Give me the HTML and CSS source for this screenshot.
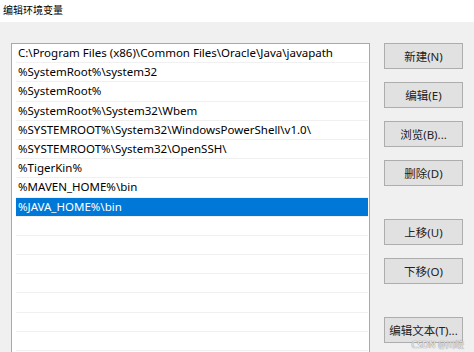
FILE: index.html
```html
<!DOCTYPE html>
<html lang="zh-CN">
<head>
    <meta charset="UTF-8">
    <meta name="viewport" content="width=device-width, initial-scale=1.0">
    <title>编辑环境变量</title>
    <link rel="stylesheet" href="styles.css">
</head>
<body>
    <div class="title-bar">编辑环境变量</div>
    <div class="dialog">
        <div class="path-list">
            <div class="row">C:\Program Files (x86)\Common Files\Oracle\Java\javapath</div>
            <div class="row">%SystemRoot%\system32</div>
            <div class="row">%SystemRoot%</div>
            <div class="row">%SystemRoot%\System32\Wbem</div>
            <div class="row">%SYSTEMROOT%\System32\WindowsPowerShell\v1.0\</div>
            <div class="row">%SYSTEMROOT%\System32\OpenSSH\</div>
            <div class="row">%TigerKin%</div>
            <div class="row">%MAVEN_HOME%\bin</div>
            <div class="row selected">%JAVA_HOME%\bin</div>
            <div class="row"></div>
            <div class="row"></div>
            <div class="row"></div>
            <div class="row"></div>
            <div class="row"></div>
            <div class="row"></div>
            <div class="row"></div>
        </div>
        <div class="buttons">
            <button>新建(N)</button>
            <button>编辑(E)</button>
            <button>浏览(B)...</button>
            <button>删除(D)</button>
            <button class="gap">上移(U)</button>
            <button>下移(O)</button>
            <button class="gap">编辑文本(T)...</button>
        </div>
    </div>
    <div class="watermark">CSDN @川峧</div>
</body>
</html>
```

FILE: styles.css
```css
body {
    margin: 0;
    padding: 0;
    height: 352px;
    overflow: hidden;
    background: #f0f0f0;
    font-family: "Noto Sans", "Noto Sans CJK SC", sans-serif;
    font-size: 11.5px;
    color: #000;
}

.title-bar {
    height: 22px;
    line-height: 20px;
    padding-left: 3px;
    background: #fff;
    font-size: 10px;
}

.dialog {
    display: flex;
    align-items: flex-start;
    padding: 21px 0 0 11px;
}

.path-list {
    width: 352px;
    height: 309px;
    overflow: hidden;
    padding: 0 1px 0 4px;
    background: #fff;
    border: 1px solid #a9a9a9;
    border-bottom: none;
}

.row {
    box-sizing: border-box;
    height: 19.2px;
    line-height: 18px;
    padding-left: 2px;
    border-bottom: 1px solid #f0f0f0;
    white-space: nowrap;
}

.row.selected {
    background: #0078d7;
    color: #fff;
}

.buttons {
    display: flex;
    flex-direction: column;
    gap: 13px;
    margin-left: 14px;
}

.buttons button {
    width: 79px;
    height: 26px;
    padding: 0;
    background: #e1e1e1;
    border: 1px solid #adadad;
    font-family: "Noto Sans", "Noto Sans CJK SC", sans-serif;
    font-size: 11.5px;
    color: #222;
}

.buttons button.gap {
    margin-top: 20px;
}

.watermark {
    position: absolute;
    right: 10px;
    bottom: 1px;
    font-size: 9px;
    color: #f4f4f4;
    text-shadow: 0 0 1px #777, 0 0 1px #999;
}
```
